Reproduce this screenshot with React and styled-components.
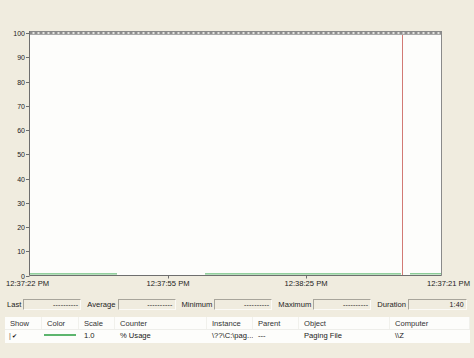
import React from 'react';
import styled, { createGlobalStyle } from 'styled-components';

const GlobalStyle = createGlobalStyle`
  html, body {
    margin: 0;
    padding: 0;
    background: #f0ecdf;
  }
  body {
    font-family: "Liberation Sans", Arial, sans-serif;
    color: #222;
  }
`;

const PLOT = { left: 29.5, right: 441.5, top: 31, bottom: 275.5 };
const Y_TICKS = [100, 90, 80, 70, 60, 50, 40, 30, 20, 10, 0];
const X_TICKS = [168, 306];

const GREEN = '#6fbf7f';

const yFor = (v) => PLOT.top + 2 + ((100 - v) / 100) * (PLOT.bottom - PLOT.top - 2);

const STATS = [
  { label: 'Last', value: '----------', width: 58 },
  { label: 'Average', value: '----------', width: 58 },
  { label: 'Minimum', value: '----------', width: 58 },
  { label: 'Maximum', value: '----------', width: 58 },
  { label: 'Duration', value: '1:40', width: 59 },
];

const COLUMNS = ['Show', 'Color', 'Scale', 'Counter', 'Instance', 'Parent', 'Object', 'Computer'];

const Chart = () => (
  <ChartSvg width="474" height="292" viewBox="0 0 474 292">
    <defs>
      <pattern id="hatch" x={PLOT.left} y={PLOT.top + 1} width="5" height="2" patternUnits="userSpaceOnUse">
        <rect width="5" height="2" fill="#e4e4e0" />
        <rect x="0" y="0" width="3" height="2" fill="#8e8e8e" />
      </pattern>
    </defs>
    <rect x={PLOT.left} y={PLOT.top} width={PLOT.right - PLOT.left} height={PLOT.bottom - PLOT.top} fill="#fdfdfb" />
    <rect x={PLOT.left} y={PLOT.top + 1} width={PLOT.right - PLOT.left} height="2" fill="url(#hatch)" />
    <line x1={PLOT.left} x2={PLOT.right} y1={PLOT.top + 0.5} y2={PLOT.top + 0.5} stroke="#8a8a8a" />
    <line x1={PLOT.left} x2={PLOT.right} y1={PLOT.top + 3.5} y2={PLOT.top + 3.5} stroke="#a8a8a8" />

    {/* data */}
    <line x1="402.5" x2="402.5" y1={PLOT.top + 4} y2={PLOT.bottom} stroke="#d27a74" />
    <g stroke={GREEN} strokeWidth="1.2">
      <line x1="30" x2="117" y1="273.8" y2="273.8" />
      <line x1="205" x2="401" y1="273.8" y2="273.8" />
      <line x1="410" x2="441" y1="273.8" y2="273.8" />
    </g>

    {/* axes */}
    <line x1={PLOT.left} x2={PLOT.left} y1={PLOT.top} y2={PLOT.bottom} stroke="#6e6e6e" />
    <line x1={PLOT.right} x2={PLOT.right} y1={PLOT.top} y2={PLOT.bottom} stroke="#8a8a8a" />
    <line x1={PLOT.left} x2={PLOT.right} y1={PLOT.bottom} y2={PLOT.bottom} stroke="#6e6e6e" />

    <g fontFamily="Liberation Sans, Arial, sans-serif" fontSize="7" fill="#222">
      {Y_TICKS.map((v) => (
        <g key={v}>
          <line x1="26" x2={PLOT.left} y1={Math.round(yFor(v)) + 0.5} y2={Math.round(yFor(v)) + 0.5} stroke="#6e6e6e" />
          <text x="25" y={Math.round(yFor(v)) + 3} textAnchor="end">{v}</text>
        </g>
      ))}
    </g>

    {X_TICKS.map((x) => (
      <line key={x} x1={x + 0.5} x2={x + 0.5} y1={PLOT.bottom} y2={PLOT.bottom + 3} stroke="#6e6e6e" />
    ))}

    <g fontFamily="Liberation Sans, Arial, sans-serif" fontSize="7.6" fill="#222">
      <text x="6" y="286">12:37:22 PM</text>
      <text x="168" y="286" textAnchor="middle">12:37:55 PM</text>
      <text x="306" y="286" textAnchor="middle">12:38:25 PM</text>
      <text x="470" y="286" textAnchor="end">12:37:21 PM</text>
    </g>
  </ChartSvg>
);

const App = () => (
  <Page>
    <GlobalStyle />
    <Chart />
    <StatsRow>
      {STATS.map((s) => (
        <Stat key={s.label}>
          <StatLabel>{s.label}</StatLabel>
          <StatBox $width={s.width}>{s.value}</StatBox>
        </Stat>
      ))}
    </StatsRow>
    <Table>
      <HeaderRow>
        {COLUMNS.map((c) => (
          <HeaderCell key={c}>{c}</HeaderCell>
        ))}
      </HeaderRow>
      <DataRow>
        <Cell>
          <Check>|<CheckMark>✔</CheckMark></Check>
        </Cell>
        <Cell>
          <Swatch />
        </Cell>
        <Cell>1.0</Cell>
        <Cell>% Usage</Cell>
        <Cell>\??\C:\pag...</Cell>
        <Cell>---</Cell>
        <Cell>Paging File</Cell>
        <Cell>\\Z</Cell>
      </DataRow>
    </Table>
  </Page>
);

const Page = styled.div`
  width: 474px;
  height: 358px;
  overflow: hidden;
  background: #f0ecdf;
  display: flex;
  flex-direction: column;
`;

const ChartSvg = styled.svg`
  display: block;
  flex: none;
`;

const StatsRow = styled.div`
  display: flex;
  align-items: center;
  padding: 6px 6px 0 7px;
  gap: 6px;
  font-size: 7.6px;
  height: 12px;
`;

const Stat = styled.div`
  display: flex;
  align-items: center;
  gap: 2px;
`;

const StatLabel = styled.span`
  white-space: nowrap;
`;

const StatBox = styled.div`
  box-sizing: border-box;
  width: ${(p) => p.$width}px;
  height: 11px;
  border-top: 1px solid #a8a59b;
  border-left: 1px solid #a8a59b;
  border-bottom: 1px solid #fbfaf6;
  border-right: 1px solid #fbfaf6;
  display: flex;
  align-items: center;
  justify-content: flex-end;
  padding-right: 2px;
  font-size: 7px;
  letter-spacing: 0.2px;
`;

const Table = styled.div`
  margin: 7px 4px 0 5px;
  background: #fdfdfb;
  font-size: 7.6px;
`;

const GRID = '37px 37px 36px 92px 46px 46px 91px 1fr';

const HeaderRow = styled.div`
  display: grid;
  grid-template-columns: ${GRID};
  height: 12px;
  align-items: center;
  border-bottom: 1px solid #eeeeea;
`;

const HeaderCell = styled.div`
  padding-left: 5px;
  color: #333;
  border-right: 1px solid #f1f1ec;
  height: 100%;
  display: flex;
  align-items: center;
`;

const DataRow = styled.div`
  display: grid;
  grid-template-columns: ${GRID};
  height: 10px;
  align-items: center;
  padding-bottom: 3px;
`;

const Cell = styled.div`
  padding-left: 5px;
  white-space: nowrap;
  overflow: hidden;
`;

const Check = styled.span`
  font-size: 7px;
  color: #555;
  display: inline-flex;
  align-items: center;
  margin-left: -1px;
`;

const CheckMark = styled.span`
  font-size: 6px;
  color: #111;
  margin-left: 1px;
`;

const Swatch = styled.div`
  width: 32px;
  height: 1.5px;
  margin-left: -3px;
  background: #5db56e;
`;

export default App;
